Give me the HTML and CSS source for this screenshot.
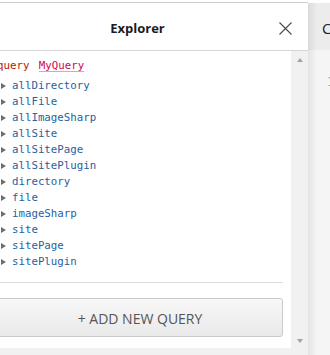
FILE: index.html
```html
<!DOCTYPE html>
<html lang="en">
<head>
<meta charset="utf-8">
<title>Explorer</title>
<link rel="stylesheet" href="styles.css">
</head>
<body>
<div class="app">
  <section class="explorer">
    <header class="ex-head">
      <span class="ex-spacer"></span>
      <h2 class="ex-title">Explorer</h2>
      <button class="ex-close" aria-label="Close">
        <svg width="13" height="13" viewBox="0 0 13 13"><path d="M0.5 0.5 L12.5 12.5 M12.5 0.5 L0.5 12.5" stroke="#4a4a4a" stroke-width="1.1" fill="none"/></svg>
      </button>
    </header>
    <div class="ex-body">
      <div class="ex-content">
        <div class="q-line"><span class="kw">query</span> <span class="qname">MyQuery</span></div>
        <ul class="fields">
          <li><span class="arrow"></span><span class="fname">allDirectory</span></li>
          <li><span class="arrow"></span><span class="fname">allFile</span></li>
          <li><span class="arrow"></span><span class="fname">allImageSharp</span></li>
          <li><span class="arrow"></span><span class="fname">allSite</span></li>
          <li><span class="arrow"></span><span class="fname">allSitePage</span></li>
          <li><span class="arrow"></span><span class="fname">allSitePlugin</span></li>
          <li><span class="arrow"></span><span class="fname">directory</span></li>
          <li><span class="arrow"></span><span class="fname">file</span></li>
          <li><span class="arrow"></span><span class="fname">imageSharp</span></li>
          <li><span class="arrow"></span><span class="fname">site</span></li>
          <li><span class="arrow"></span><span class="fname">sitePage</span></li>
          <li><span class="arrow"></span><span class="fname">sitePlugin</span></li>
        </ul>
        <hr class="sep">
        <button class="add">+ ADD NEW QUERY</button>
      </div>
      <div class="vscroll"><span class="up"></span><span class="down"></span></div>
      <div class="hscroll"></div>
    </div>
  </section>
  <section class="editor">
    <div class="ed-head">C</div>
    <div class="ed-body"><span class="ln">1</span></div>
  </section>
</div>
</body>
</html>
```
FILE: styles.css
```css
html, body {
  margin: 0;
  height: 100%;
  overflow: hidden;
  background: #fff;
}
body {
  padding-top: 2px;
  box-sizing: border-box;
}
.app {
  display: flex;
  height: 363px;
}
.explorer {
  flex: 0 0 341px;
  margin-left: -33px;
  border-top: 1px solid #cfcfcf;
  display: flex;
  flex-direction: column;
  background: #fff;
}
.ex-head {
  height: 48px;
  box-sizing: border-box;
  padding-top: 3px;
  display: grid;
  grid-template-columns: 1fr auto 1fr;
  align-items: center;
  border-bottom: 1px solid #d6d6d6;
}
.ex-title {
  margin: 0;
  font: 700 13px "Open Sans", sans-serif;
  color: #1b1b24;
}
.ex-close {
  justify-self: end;
  margin-right: 16px;
  width: 13px;
  height: 13px;
  padding: 0;
  border: 0;
  background: none;
  display: flex;
}
.ex-body {
  flex: 1;
  display: grid;
  grid-template-columns: 1fr 17px;
  grid-template-rows: 297px 17px;
}
.ex-content {
  padding: 7px 8px 0 30px;
  overflow: hidden;
}
.q-line {
  font: 10.75px/16px "DejaVu Sans Mono", monospace;
  margin-bottom: 4px;
  white-space: nowrap;
}
.kw {
  color: #b11a04;
}
.qname {
  margin-left: 3px;
  color: #d2054e;
  text-decoration: underline;
  text-decoration-color: #d4aab6;
  text-underline-offset: 2px;
}
.fields {
  list-style: none;
  margin: 0 0 0 3px;
  padding: 0;
  font: 10.75px/16px "DejaVu Sans Mono", monospace;
  color: #1f61a0;
}
.fields li {
  display: flex;
  align-items: center;
  height: 16px;
}
.arrow {
  flex: none;
  width: 12px;
  display: flex;
  align-items: center;
}
.arrow::before {
  content: "";
  width: 0;
  height: 0;
  margin-left: 0.5px;
  border-left: 5px solid #6e6e6e;
  border-top: 3px solid transparent;
  border-bottom: 3px solid transparent;
}
.sep {
  margin: 12px 0 15px;
  border: 0;
  border-top: 1px solid #dcdcdc;
  height: 0;
}
.add {
  display: block;
  width: 100%;
  height: 39px;
  padding: 2px 0 0;
  border: 1px solid #c9c9c9;
  border-radius: 3px;
  background: linear-gradient(#f8f8f8, #e9e9e9);
  font: 14px "Open Sans", sans-serif;
  color: #555;
}
.vscroll {
  background: #f1f1f1;
  display: flex;
  flex-direction: column;
  justify-content: space-between;
  align-items: center;
  padding: 7px 0 5px;
}
.up, .down {
  width: 0;
  height: 0;
  border-left: 3.5px solid transparent;
  border-right: 3.5px solid transparent;
}
.up {
  border-bottom: 4px solid #a3a3a3;
}
.down {
  border-top: 4px solid #a3a3a3;
}
.hscroll {
  grid-column: 1 / 3;
  background: #f1f1f1;
}
.editor {
  flex: 1;
  margin-top: 1px;
  display: flex;
  flex-direction: column;
  background: linear-gradient(to right, #e3e3e3, #f5f5f5 9px);
  overflow: hidden;
}
.ed-head {
  height: 47px;
  box-sizing: border-box;
  padding: 2px 0 0 14px;
  display: flex;
  align-items: center;
  background: linear-gradient(to right, #dadada, #ececec 9px);
  font: 15px "Open Sans", sans-serif;
  color: #222;
  white-space: nowrap;
}
.ed-body {
  flex: 1;
  padding: 24px 0 0 19px;
  font: 12px/16px "DejaVu Sans Mono", monospace;
  color: #a0a0a0;
}
```
